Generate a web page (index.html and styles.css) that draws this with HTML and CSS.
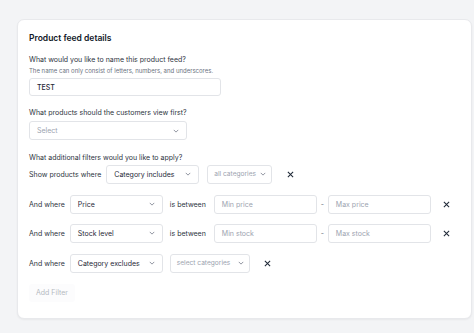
FILE: index.html
```html
<!DOCTYPE html>
<html>
<head>
<meta charset="utf-8">
<link rel="stylesheet" href="styles.css">
</head>
<body>
<div class="card">
  <h1 class="title">Product feed details</h1>

  <div class="field">
    <div class="label">What would you like to name this product feed?</div>
    <div class="help">The name can only consist of letters, numbers, and underscores.</div>
    <div class="input input-name"><span class="value">TEST</span></div>
  </div>

  <div class="field field-2">
    <div class="label">What products should the customers view first?</div>
    <div class="select select-first">
      <span class="placeholder">Select</span>
      <svg class="chev" viewBox="0 0 8 5"><path d="M1 1l3 3 3-3"/></svg>
    </div>
  </div>

  <div class="field field-3">
    <div class="label">What additional filters would you like to apply?</div>
    <div class="row row-first">
      <span class="rtext">Show products where</span>
      <div class="select sel-type"><span class="value">Category includes</span><svg class="chev" viewBox="0 0 8 5"><path d="M1 1l3 3 3-3"/></svg></div>
      <div class="select sel-cat sel-all"><span class="placeholder">all categories</span><svg class="chev" viewBox="0 0 8 5"><path d="M1 1l3 3 3-3"/></svg></div>
      <svg class="x x-1" viewBox="0 0 8 8"><path d="M1 1l6 6M7 1L1 7"/></svg>
    </div>
    <div class="row">
      <span class="rtext">And where</span>
      <div class="select sel-type"><span class="value">Price</span><svg class="chev" viewBox="0 0 8 5"><path d="M1 1l3 3 3-3"/></svg></div>
      <span class="rtext between">is between</span>
      <div class="input range"><span class="placeholder">Min price</span></div>
      <span class="dash">-</span>
      <div class="input range"><span class="placeholder">Max price</span></div>
      <svg class="x x-2" viewBox="0 0 8 8"><path d="M1 1l6 6M7 1L1 7"/></svg>
    </div>
    <div class="row row-mid">
      <span class="rtext">And where</span>
      <div class="select sel-type"><span class="value">Stock level</span><svg class="chev" viewBox="0 0 8 5"><path d="M1 1l3 3 3-3"/></svg></div>
      <span class="rtext between">is between</span>
      <div class="input range"><span class="placeholder">Min stock</span></div>
      <span class="dash">-</span>
      <div class="input range"><span class="placeholder">Max stock</span></div>
      <svg class="x x-2" viewBox="0 0 8 8"><path d="M1 1l6 6M7 1L1 7"/></svg>
    </div>
    <div class="row">
      <span class="rtext">And where</span>
      <div class="select sel-type"><span class="value">Category excludes</span><svg class="chev" viewBox="0 0 8 5"><path d="M1 1l3 3 3-3"/></svg></div>
      <div class="select sel-cat sel-some"><span class="placeholder">select categories</span><svg class="chev" viewBox="0 0 8 5"><path d="M1 1l3 3 3-3"/></svg></div>
      <svg class="x x-3" viewBox="0 0 8 8"><path d="M1 1l6 6M7 1L1 7"/></svg>
    </div>
  </div>

  <div class="add">Add Filter</div>
</div>
</body>
</html>
```

FILE: styles.css
```css
* { box-sizing: border-box; }
html, body { margin: 0; padding: 0; }
body {
  background: #f3f4f6;
  font-family: Inter, "Noto Sans", sans-serif;
  color: #1f2937;
  padding: 19px 2px 14px 17px;
}
.card {
  background: #ffffff;
  border: 1px solid #e8e9ec;
  border-radius: 7px;
  box-shadow: 0 1px 2px rgba(0,0,0,0.05);
  height: 300px;
  padding: 12px 11px 0 11px;
}
.title {
  margin: 0;
  font-size: 8.5px;
  font-weight: 600;
  line-height: 12px;
  color: #111827;
}
.field { margin-top: 11px; }
.field-2 { margin-top: 12px; }
.field-3 { margin-top: 13px; }
.label {
  font-size: 7px;
  line-height: 10px;
  color: #2d3440;
}
.help {
  font-size: 6px;
  line-height: 9px;
  color: #6b7280;
  margin-top: 1px;
}
.input, .select {
  display: flex;
  align-items: center;
  height: 19px;
  border: 1px solid #e2e4e8;
  border-radius: 3px;
  background: #fff;
  font-size: 7px;
  padding: 0 7px;
  white-space: nowrap;
  overflow: hidden;
}
.input-name { width: 192px; margin-top: 3px; height: 18px; }
.value { color: #1f2937; }
.input-name .value { font-weight: 500; }
.placeholder { color: #9ca3af; }
.select { justify-content: space-between; }
.select-first { width: 158px; margin-top: 3px; }
.chev {
  width: 6px;
  height: 4px;
  fill: none;
  stroke: #6b7280;
  stroke-width: 1;
  flex: none;
}
.row {
  display: flex;
  align-items: center;
  margin-top: 10px;
  height: 20px;
}
.row-first { margin-top: 1px; }
.row-mid { margin-top: 9px; }
.rtext {
  font-size: 7px;
  color: #2d3440;
  margin-right: 5px;
  white-space: nowrap;
}
.between { margin-left: 0; margin-right: 8px; }
.sel-type { width: 93px; margin-right: 7px; }
.sel-cat { justify-content: space-between; padding: 0 5px 0 6px; }
.sel-cat .placeholder { font-size: 6.6px; }
.sel-all { width: 65px; margin-left: 1px; }
.sel-some { width: 80px; margin-left: 0; }
.range { width: 103px; }
.dash {
  font-size: 7px;
  color: #6b7280;
  width: 11px;
  text-align: center;
}
.x {
  width: 7px;
  height: 7px;
  fill: none;
  stroke: #1f2937;
  stroke-width: 1.2;
  flex: none;
}
.x-1 { margin-left: 15px; }
.x-2 { margin-left: 12px; }
.x-3 { margin-left: 14px; }
.add {
  margin-top: 11px;
  display: inline-block;
  font-size: 7px;
  color: #b5b9bf;
  padding: 4px 7px;
  line-height: 10px;
  background: #fcfcfd;
  border-radius: 3px;
}
```
